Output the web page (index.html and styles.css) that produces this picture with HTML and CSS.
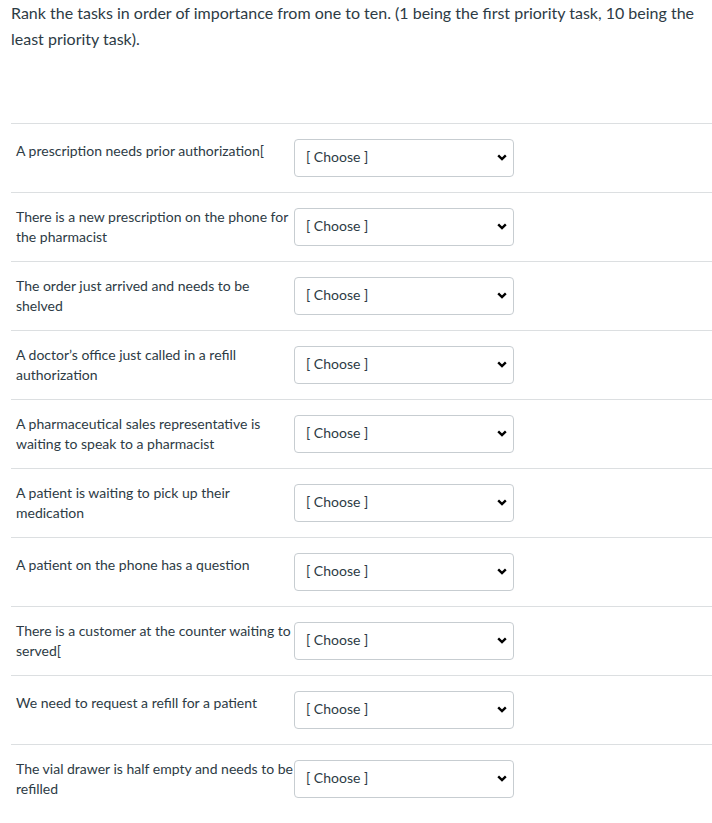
FILE: index.html
```html
<!DOCTYPE html>
<html lang="en">

<head>
    <meta charset="UTF-8">
    <meta name="viewport" content="width=device-width, initial-scale=1.0">
    <title>Rank the tasks</title>
    <link rel="stylesheet" href="styles.css">
</head>

<body>
    <div class="question">
        <p class="question-text">
            Rank the tasks in order of importance from one to ten. (1 being the first priority task, 10 being the least priority task).
        </p>

        <div class="answers">
            <div class="answer">
                <div class="label single">A prescription needs prior authorization[</div>
                <div class="select-wrap">
                    <select class="choose"><option>[ Choose ]</option></select>
                    <svg class="arrow" width="10" height="7" viewBox="0 0 10 7"><path d="M1.2 1.3 L5 5 L8.8 1.3" /></svg>
                </div>
            </div>
            <div class="answer">
                <div class="label">There is a new prescription on the phone for the pharmacist</div>
                <div class="select-wrap">
                    <select class="choose"><option>[ Choose ]</option></select>
                    <svg class="arrow" width="10" height="7" viewBox="0 0 10 7"><path d="M1.2 1.3 L5 5 L8.8 1.3" /></svg>
                </div>
            </div>
            <div class="answer">
                <div class="label">The order just arrived and needs to be shelved</div>
                <div class="select-wrap">
                    <select class="choose"><option>[ Choose ]</option></select>
                    <svg class="arrow" width="10" height="7" viewBox="0 0 10 7"><path d="M1.2 1.3 L5 5 L8.8 1.3" /></svg>
                </div>
            </div>
            <div class="answer">
                <div class="label">A doctor’s office just called in a refill authorization</div>
                <div class="select-wrap">
                    <select class="choose"><option>[ Choose ]</option></select>
                    <svg class="arrow" width="10" height="7" viewBox="0 0 10 7"><path d="M1.2 1.3 L5 5 L8.8 1.3" /></svg>
                </div>
            </div>
            <div class="answer">
                <div class="label">A pharmaceutical sales representative is waiting to speak to a pharmacist</div>
                <div class="select-wrap">
                    <select class="choose"><option>[ Choose ]</option></select>
                    <svg class="arrow" width="10" height="7" viewBox="0 0 10 7"><path d="M1.2 1.3 L5 5 L8.8 1.3" /></svg>
                </div>
            </div>
            <div class="answer">
                <div class="label">A patient is waiting to pick up their medication</div>
                <div class="select-wrap">
                    <select class="choose"><option>[ Choose ]</option></select>
                    <svg class="arrow" width="10" height="7" viewBox="0 0 10 7"><path d="M1.2 1.3 L5 5 L8.8 1.3" /></svg>
                </div>
            </div>
            <div class="answer">
                <div class="label single">A patient on the phone has a question</div>
                <div class="select-wrap">
                    <select class="choose"><option>[ Choose ]</option></select>
                    <svg class="arrow" width="10" height="7" viewBox="0 0 10 7"><path d="M1.2 1.3 L5 5 L8.8 1.3" /></svg>
                </div>
            </div>
            <div class="answer">
                <div class="label">There is a customer at the counter waiting to served[</div>
                <div class="select-wrap">
                    <select class="choose"><option>[ Choose ]</option></select>
                    <svg class="arrow" width="10" height="7" viewBox="0 0 10 7"><path d="M1.2 1.3 L5 5 L8.8 1.3" /></svg>
                </div>
            </div>
            <div class="answer">
                <div class="label single">We need to request a refill for a patient</div>
                <div class="select-wrap">
                    <select class="choose"><option>[ Choose ]</option></select>
                    <svg class="arrow" width="10" height="7" viewBox="0 0 10 7"><path d="M1.2 1.3 L5 5 L8.8 1.3" /></svg>
                </div>
            </div>
            <div class="answer">
                <div class="label">The vial drawer is half empty and needs to be refilled</div>
                <div class="select-wrap">
                    <select class="choose"><option>[ Choose ]</option></select>
                    <svg class="arrow" width="10" height="7" viewBox="0 0 10 7"><path d="M1.2 1.3 L5 5 L8.8 1.3" /></svg>
                </div>
            </div>
        </div>
    </div>
</body>

</html>
```

FILE: styles.css
```css
* {
    margin: 0;
    padding: 0;
    box-sizing: border-box;
}

body {
    font-family: Lato, "Liberation Sans", sans-serif;
    color: #2d3b45;
    background-color: white;
}

.question {
    padding-left: 11px;
}

.question-text {
    font-size: 16px;
    line-height: 26px;
    padding-right: 10px;
    margin-bottom: 71px;
}

.answer {
    display: flex;
    align-items: flex-start;
    border-top: 1px solid #dcdfe1;
    padding: 15px 0;
    height: 69px;
}

.label {
    width: 283px;
    padding-left: 5px;
    margin-top: -1px;
    font-size: 14px;
    line-height: 20px;
}

.label.single {
    margin-top: 2px;
}

.select-wrap {
    position: relative;
    width: 220px;
}

.choose {
    appearance: none;
    -webkit-appearance: none;
    width: 100%;
    height: 38px;
    border: 1px solid #c7cdd1;
    border-radius: 4px;
    background-color: white;
    padding: 0 30px 3px 11px;
    font-family: Lato, "Liberation Sans", sans-serif;
    font-size: 14px;
    color: #2d3b45;
}

.arrow {
    position: absolute;
    right: 7px;
    top: 15px;
    pointer-events: none;
}

.arrow path {
    fill: none;
    stroke: black;
    stroke-width: 2.4;
}
```
